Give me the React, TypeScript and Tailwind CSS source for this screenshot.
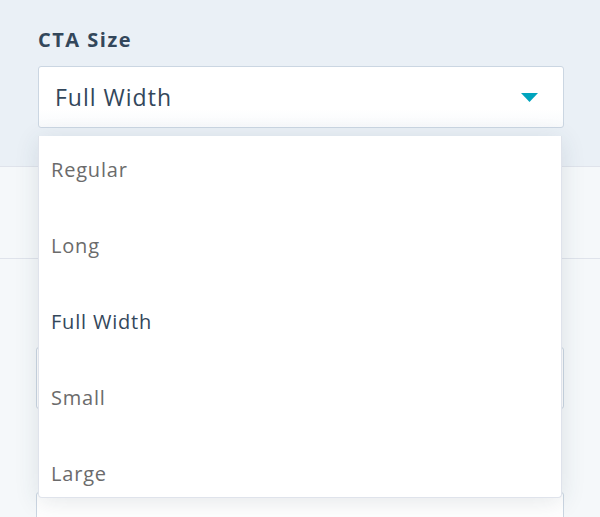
import React from "react";

const options = ["Regular", "Long", "Full Width", "Small", "Large"];

export default function App() {
  const selected = "Full Width";

  return (
    <div className="relative h-[517px] w-full overflow-hidden bg-[#f5f8fa] font-['Open_Sans',sans-serif]">
      {/* CTA size field */}
      <div className="h-[167px] border-b border-[#dfe3eb] bg-[#eaf0f6] px-[38px] pt-[27px]">
        <label className="block text-[20px] font-bold leading-[26px] tracking-[1.5px] text-[#33475b]">CTA Size</label>
        <div className="mt-[13px] flex h-[62px] w-[526px] items-center justify-between rounded-[3px] border border-[#cbd6e2] bg-gradient-to-b from-white from-70% to-[#f8fafc] pl-[16px] pr-[25px]">
          <span className="text-[23px] leading-none tracking-[1px] text-[#33475b]">{selected}</span>
          <svg width="17" height="9" viewBox="0 0 17 9">
            <path d="M0 0h17L8.5 9z" fill="#00a4bd" />
          </svg>
        </div>
      </div>

      <div className="h-[92px] border-b border-[#dfe3eb]" />

      <div className="flex flex-col gap-[83px] px-[36px] pt-[88px]">
        <div className="h-[62px] w-[528px] rounded-[3px] border border-[#cbd6e2] bg-white" />
        <div className="h-[62px] w-[528px] rounded-[3px] border border-[#cbd6e2] bg-white" />
      </div>

      {/* open dropdown */}
      <div className="absolute left-[38px] top-[136px] h-[362px] w-[524px] overflow-hidden rounded-b-[4px] border border-t-0 border-[#dfe3eb] bg-white shadow-[0_4px_24px_rgba(45,62,80,0.12)]">
        <ul className="-mt-[4px]">
          {options.map((o) => (
            <li
              key={o}
              className={`flex h-[76px] items-center pl-[12px] text-[20px] tracking-[0.8px] ${
                o === selected ? "text-[#33475b]" : "text-[#6b6b6b]"
              }`}
            >
              {o}
            </li>
          ))}
        </ul>
      </div>
    </div>
  );
}
